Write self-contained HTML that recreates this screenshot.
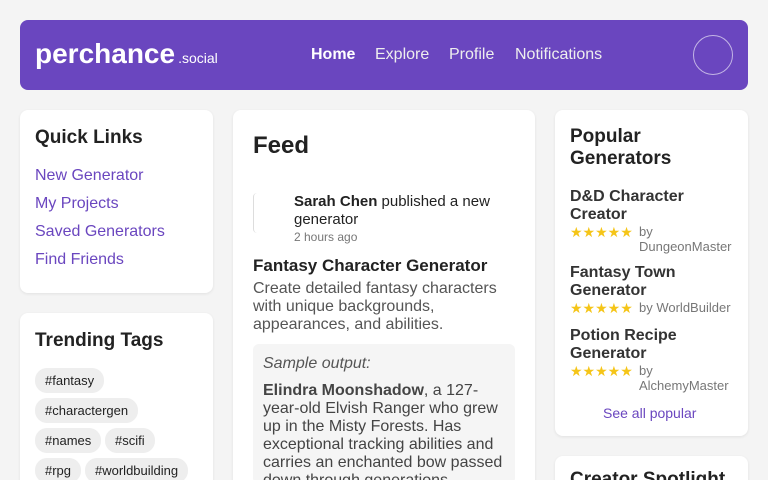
<!DOCTYPE html>
<html><head><meta charset="utf-8"><style>
*{margin:0;padding:0;box-sizing:border-box}
html,body{width:768px;height:480px;overflow:hidden}
body{background:#f4f4f4;font-family:"Liberation Sans",sans-serif;position:relative;color:#222}
.a{position:absolute;white-space:nowrap}
.card{position:absolute;background:#fff;border-radius:8px;box-shadow:0 1px 3px rgba(0,0,0,.08)}
.hdr{position:absolute;left:20px;top:20px;width:728px;height:70px;background:#6a46bf;border-radius:8px}
.nav{color:#eee;font-size:16px}
.lnk{color:#6a46bf;font-size:16px}
.tag{position:absolute;background:#eee;border-radius:12px;font-size:13px;height:25px;line-height:25px;padding:0 10px;color:#222}
.gt{font-size:16px;font-weight:bold;color:#333;line-height:18px}
.st{color:#f5c518;font-size:14px}
.by{color:#777;font-size:13px;line-height:15px}
</style></head><body>
<div class="hdr"></div>
<div class="a" style="left:35px;top:38px;color:#fff;font-size:28px;font-weight:bold">perchance<span style="font-size:14px;font-weight:normal;margin-left:3px">.social</span></div>
<div class="a nav" style="left:311px;top:46px;font-weight:bold;color:#fff">Home</div>
<div class="a nav" style="left:375px;top:46px">Explore</div>
<div class="a nav" style="left:449px;top:46px">Profile</div>
<div class="a nav" style="left:515px;top:46px">Notifications</div>
<div class="a" style="left:693px;top:35px;width:40px;height:40px;border-radius:50%;border:1px solid rgba(255,255,255,.6)"></div>

<div class="card" style="left:20px;top:110px;width:193px;height:183px"></div>
<div class="a" style="left:35px;top:127px;font-size:19px;font-weight:bold">Quick Links</div>
<div class="a lnk" style="left:35px;top:167px">New Generator</div>
<div class="a lnk" style="left:35px;top:195px">My Projects</div>
<div class="a lnk" style="left:35px;top:223px">Saved Generators</div>
<div class="a lnk" style="left:35px;top:251px">Find Friends</div>

<div class="card" style="left:20px;top:313px;width:193px;height:200px"></div>
<div class="a" style="left:35px;top:330px;font-size:19px;font-weight:bold">Trending Tags</div>
<div class="tag" style="left:35px;top:368px">#fantasy</div>
<div class="tag" style="left:35px;top:398px">#charactergen</div>
<div class="tag" style="left:35px;top:428px">#names</div>
<div class="tag" style="left:105px;top:428px">#scifi</div>
<div class="tag" style="left:35px;top:458px">#rpg</div>
<div class="tag" style="left:85px;top:458px">#worldbuilding</div>

<div class="card" style="left:233px;top:110px;width:302px;height:400px"></div>
<div class="a" style="left:253px;top:132px;font-size:24px;font-weight:bold">Feed</div>
<div class="a" style="left:253px;top:193px;width:40px;height:40px;border-left:1px solid #ddd;border-radius:4px"></div>
<div class="a" style="left:294px;top:193px;font-size:15px;line-height:18px;white-space:normal;width:220px"><b>Sarah Chen</b> published a new generator</div>
<div class="a" style="left:294px;top:230px;font-size:12px;color:#777">2 hours ago</div>
<div class="a" style="left:253px;top:256px;font-size:17px;font-weight:bold">Fantasy Character Generator</div>
<div class="a" style="left:253px;top:280px;width:260px;font-size:16px;line-height:18px;color:#555;white-space:normal">Create detailed fantasy characters with unique backgrounds, appearances, and abilities.</div>
<div class="a" style="left:253px;top:344px;width:262px;height:140px;background:#f5f5f5;border-radius:6px"></div>
<div class="a" style="left:263px;top:355px;font-size:16px;font-style:italic;color:#555">Sample output:</div>
<div class="a" style="left:263px;top:382px;width:245px;font-size:16px;line-height:18px;color:#444;white-space:normal"><b>Elindra Moonshadow</b>, a 127-year-old Elvish Ranger who grew up in the Misty Forests. Has exceptional tracking abilities and carries an enchanted bow passed down through generations.</div>

<div class="card" style="left:555px;top:110px;width:193px;height:326px"></div>
<div class="a" style="left:570px;top:126px;font-size:19px;font-weight:bold;line-height:22px;white-space:normal;width:160px">Popular Generators</div>
<div class="a gt" style="left:570px;top:188px;white-space:normal;width:160px">D&amp;D Character Creator</div>
<div class="a st" style="left:570px;top:224px">★★★★★</div>
<div class="a by" style="left:639px;top:224px">by<br>DungeonMaster</div>
<div class="a gt" style="left:570px;top:264px;white-space:normal;width:160px">Fantasy Town Generator</div>
<div class="a st" style="left:570px;top:300px">★★★★★</div>
<div class="a by" style="left:639px;top:300px">by WorldBuilder</div>
<div class="a gt" style="left:570px;top:327px;white-space:normal;width:160px">Potion Recipe Generator</div>
<div class="a st" style="left:570px;top:363px">★★★★★</div>
<div class="a by" style="left:639px;top:363px">by<br>AlchemyMaster</div>
<div class="a" style="left:603px;top:405px;font-size:14px;color:#6a46bf">See all popular</div>

<div class="card" style="left:555px;top:456px;width:193px;height:60px"></div>
<div class="a" style="left:570px;top:469px;font-size:19px;font-weight:bold">Creator Spotlight</div>
</body></html>
